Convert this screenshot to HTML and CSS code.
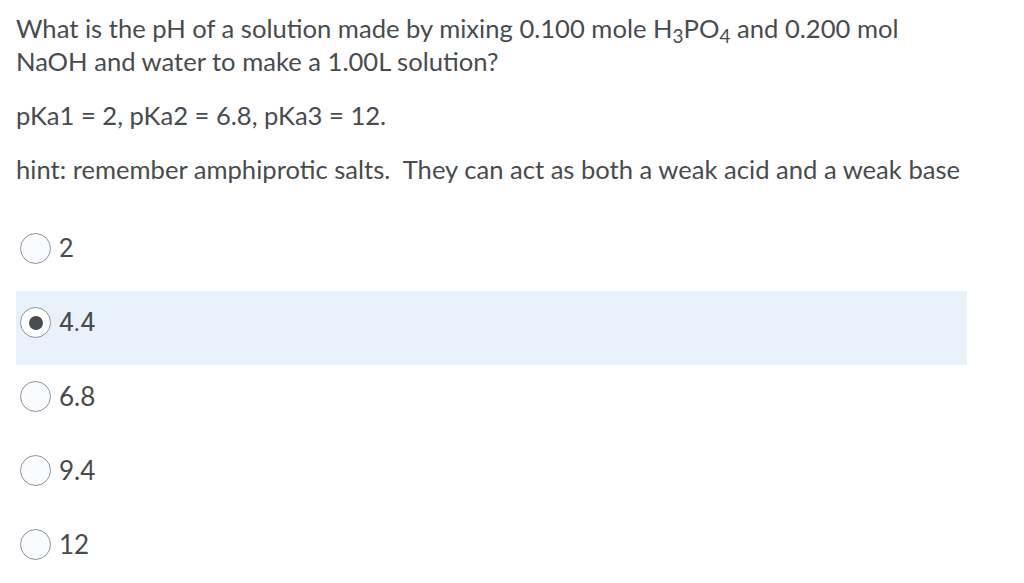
FILE: index.html
```html
<!DOCTYPE html>
<html>
<head>
<meta charset="utf-8">
<link rel="stylesheet" href="styles.css">
</head>
<body>
<div class="question">
  <p class="para">What is the pH of a solution made by mixing 0.100 mole H<sub>3</sub>PO<sub>4</sub> and 0.200 mol NaOH and water to make a 1.00L solution?</p>
  <p class="para">pKa1 = 2, pKa2 = 6.8, pKa3 = 12.</p>
  <p class="para">hint: remember amphiprotic salts.&nbsp; They can act as both a weak acid and a weak base</p>
</div>
<div class="options">
  <label class="option"><span class="radio"></span><span class="opt-text alt">2</span></label>
  <label class="option selected"><span class="radio checked"></span><span class="opt-text alt">4.4</span></label>
  <label class="option"><span class="radio"></span><span class="opt-text">6.8</span></label>
  <label class="option"><span class="radio"></span><span class="opt-text">9.4</span></label>
  <label class="option"><span class="radio"></span><span class="opt-text">12</span></label>
</div>
</body>
</html>
```

FILE: styles.css
```css
html, body {
  margin: 0;
  padding: 0;
  background: #ffffff;
}
body {
  font-family: Lato, "Noto Sans", sans-serif;
  color: #494c4e;
  font-size: 25.6px;
  padding: 12px 0 0 16px;
  width: 951px;
}
.para {
  margin: 0 0 21px 0;
  line-height: 33px;
}
.para sub {
  font-size: 19px;
  vertical-align: -5px;
  line-height: 1;
}
.options {
  margin-top: 31px;
  display: flex;
  flex-direction: column;
}
.option {
  display: flex;
  align-items: flex-start;
  height: 74px;
  box-sizing: border-box;
  padding: 16px 0 0 4px;
  gap: 8px;
}
.option.selected {
  background: #e9f1fb;
}
.radio {
  width: 31px;
  height: 31px;
  box-sizing: border-box;
  border-radius: 50%;
  border: 1px solid #8f9396;
  background: #f9fbff;
  display: flex;
  align-items: center;
  justify-content: center;
  flex: none;
}
.radio.checked {
  background: #ffffff;
}
.radio.checked::after {
  content: "";
  width: 14px;
  height: 14px;
  border-radius: 50%;
  background: #494c4e;
}
.opt-text {
  line-height: 31px;
  font-size: 26px;
}
.opt-text.alt {
  font-family: Roboto, "Liberation Sans", sans-serif;
  font-size: 26px;
}
```
